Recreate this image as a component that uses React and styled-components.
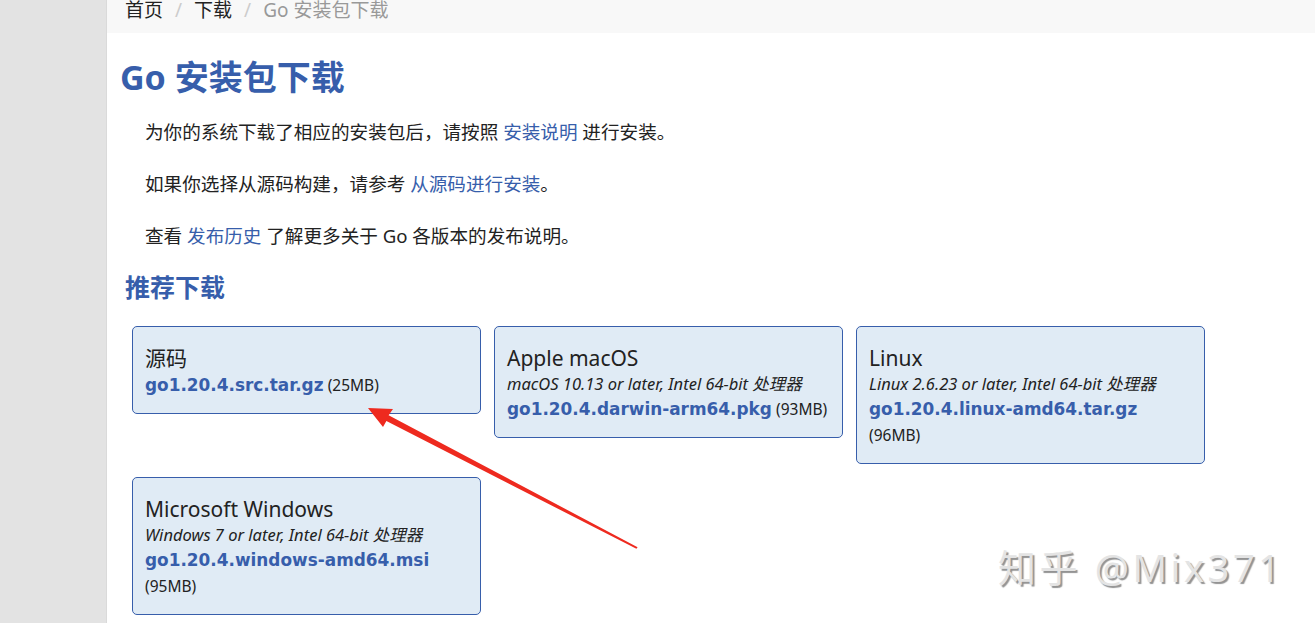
import styled, { createGlobalStyle } from 'styled-components';

// ── Globals ───────────────────────────────────────────────────
const GlobalStyles = createGlobalStyle`
  * { box-sizing: border-box; }
  html, body {
    margin: 0;
    padding: 0;
    background: #fff;
    font-family: "Noto Sans", "Noto Sans CJK SC", sans-serif;
    color: #222;
    overflow: hidden;
  }
`;

const BLUE = '#375eab';

// ── Layout ────────────────────────────────────────────────────
const Page = styled.div`
  position: relative;
  display: flex;
  width: 1315px;
  height: 623px;
  overflow: hidden;
`;

const Sidebar = styled.aside`
  width: 107px;
  flex-shrink: 0;
  background: #e3e3e3;
  border-right: 1px solid #dadada;
`;

const Main = styled.main`
  flex: 1;
  display: flex;
  flex-direction: column;
`;

const Breadcrumb = styled.nav`
  height: 33px;
  background: #f8f8f8;
  padding-left: 18px;
  display: flex;
  align-items: flex-start;
  gap: 12px;
  font-size: 19px;
  line-height: 21px;
`;

const Crumb = styled.span`
  color: ${({ $current }) => ($current ? '#999' : '#222')};
`;

const Sep = styled.span`
  color: #ccc;
`;

const Content = styled.div`
  padding-left: 13px;
`;

const Title = styled.h1`
  margin: 24px 0 0;
  font-size: 34px;
  line-height: 40px;
  font-weight: 700;
  color: ${BLUE};
`;

const Para = styled.p`
  margin: 22px 0 0 25px;
  font-size: 18.6px;
  line-height: 26px;

  & + & {
    margin-top: 26px;
  }
`;

const Link = styled.a`
  color: ${BLUE};
  text-decoration: none;
`;

const SubTitle = styled.h2`
  margin: 22px 0 0 5px;
  font-size: 25px;
  line-height: 32px;
  font-weight: 700;
  color: ${BLUE};
`;

const Boxes = styled.div`
  margin: 23px 0 0 12px;
  width: 1080px;
  display: flex;
  flex-wrap: wrap;
  align-items: flex-start;
  gap: 13px;
`;

const Box = styled.div`
  width: 349px;
  padding: 17px 12px 14px;
  background: #e0ebf5;
  border: 1px solid ${BLUE};
  border-radius: 5px;
`;

const BoxTitle = styled.div`
  font-size: 21px;
  line-height: 28px;
  color: #222;
`;

const Desc = styled.div`
  font-size: 16.5px;
  line-height: 24px;
  font-style: italic;
  color: #222;
`;

const FileLine = styled.div`
  line-height: 26px;
`;

const FileName = styled.a`
  font-family: "DejaVu Sans", "Noto Sans", sans-serif;
  font-size: 16.9px;
  font-weight: 700;
  color: ${BLUE};
  text-decoration: none;
`;

const Size = styled.span`
  font-size: 15.5px;
  color: #222;
  display: ${({ $block }) => ($block ? 'block' : 'inline')};
  line-height: 27px;
`;

// ── Overlays (annotation arrow, watermark) ────────────────────
const Overlay = styled.svg`
  position: absolute;
  left: 0;
  top: 0;
  pointer-events: none;
`;

const Watermark = styled.div`
  position: absolute;
  left: 998px;
  top: 543px;
  font-size: 38px;
  line-height: 48px;
  letter-spacing: 3.6px;
  color: #e4e4e4;
  text-shadow: 2px 2px 1px #939393;
  white-space: nowrap;
  pointer-events: none;
`;

const downloads = [
  { title: '源码', file: 'go1.20.4.src.tar.gz', size: '25MB' },
  {
    title: 'Apple macOS',
    desc: 'macOS 10.13 or later, Intel 64-bit 处理器',
    file: 'go1.20.4.darwin-arm64.pkg',
    size: '93MB',
  },
  {
    title: 'Linux',
    desc: 'Linux 2.6.23 or later, Intel 64-bit 处理器',
    file: 'go1.20.4.linux-amd64.tar.gz',
    size: '96MB',
    wrap: true,
  },
  {
    title: 'Microsoft Windows',
    desc: 'Windows 7 or later, Intel 64-bit 处理器',
    file: 'go1.20.4.windows-amd64.msi',
    size: '95MB',
    wrap: true,
  },
];

function Arrow() {
  return (
    <Overlay width="1315" height="623" viewBox="0 0 1315 623">
      <polygon
        fill="#ee2a1f"
        points="368,408 393,409 388.6,415.3 637.6,547.2 636.4,548.8 386.4,421.1 383,427"
      />
    </Overlay>
  );
}

// ── App ───────────────────────────────────────────────────────
export default function App() {
  return (
    <>
      <GlobalStyles />
      <Page>
        <Sidebar />
        <Main>
          <Breadcrumb>
            <Crumb>首页</Crumb>
            <Sep>/</Sep>
            <Crumb>下载</Crumb>
            <Sep>/</Sep>
            <Crumb $current>Go 安装包下载</Crumb>
          </Breadcrumb>

          <Content>
            <Title>Go 安装包下载</Title>
            <Para>
              为你的系统下载了相应的安装包后，请按照 <Link href="#">安装说明</Link> 进行安装。
            </Para>
            <Para>
              如果你选择从源码构建，请参考 <Link href="#">从源码进行安装</Link>。
            </Para>
            <Para>
              查看 <Link href="#">发布历史</Link> 了解更多关于 Go 各版本的发布说明。
            </Para>

            <SubTitle>推荐下载</SubTitle>
            <Boxes>
              {downloads.map((d) => (
                <Box key={d.file}>
                  <BoxTitle>{d.title}</BoxTitle>
                  {d.desc && <Desc>{d.desc}</Desc>}
                  <FileLine>
                    <FileName href="#">{d.file}</FileName>
                    {!d.wrap && ' '}
                    <Size $block={d.wrap}>({d.size})</Size>
                  </FileLine>
                </Box>
              ))}
            </Boxes>
          </Content>
        </Main>
        <Arrow />
        <Watermark>知乎 @Mix371</Watermark>
      </Page>
    </>
  );
}
